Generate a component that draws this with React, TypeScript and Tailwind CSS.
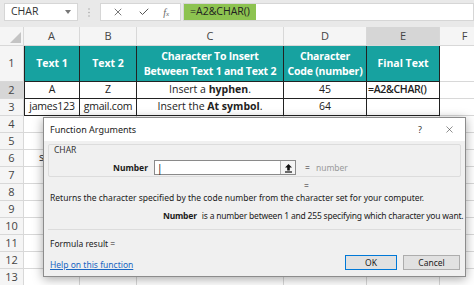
import { X, Check } from 'lucide-react';

const cellFont = { fontFamily: '"Open Sans", "Noto Sans", sans-serif' };
const uiFont = { fontFamily: '"Noto Sans", "Open Sans", sans-serif' };

// column widths: rowhead, A, B, C, D, E, F
const cols = 'grid grid-cols-[24px_56px_57px_147px_83px_73px_50px]';
const letters = ['A', 'B', 'C', 'D', 'E', 'F'];

function UploadIcon() {
    return (
        <svg width="9" height="10" viewBox="0 0 9 10">
            <path d="M4.5 1 L8 4.6 H5.8 V7.4 H3.2 V4.6 H1 Z" fill="#111" />
            <rect x="1" y="8.4" width="7" height="1.2" fill="#111" />
        </svg>
    );
}

function FormulaBar() {
    return (
        <div className="h-[24px] bg-[#e9e9e9] flex items-start pt-[3px] pl-[4px] gap-0" style={cellFont}>
            <div className="w-[74px] h-[18px] bg-white border border-[#d6d6d6] flex items-center justify-between px-[6px] text-[10.5px] text-[#333]">
                <span>CHAR</span>
                <svg width="6" height="4" viewBox="0 0 6 4">
                    <path d="M0 0 H6 L3 4 Z" fill="#777" />
                </svg>
            </div>
            <div className="w-[22px] h-[18px] flex items-center justify-center">
                <svg width="2" height="9" viewBox="0 0 2 9">
                    <circle cx="1" cy="1" r="0.8" fill="#aaa" />
                    <circle cx="1" cy="4.5" r="0.8" fill="#aaa" />
                    <circle cx="1" cy="8" r="0.8" fill="#aaa" />
                </svg>
            </div>
            <div className="w-[81px] h-[18px] bg-white border border-[#d6d6d6] flex items-center justify-around px-[4px] text-[#555]">
                <X size={12} strokeWidth={1.6} />
                <Check size={12} strokeWidth={2} />
                <span className="italic text-[10px] text-[#666]" style={{ fontFamily: '"Liberation Serif", serif' }}>
                    f<span className="text-[7px]">x</span>
                </span>
            </div>
            <div className="flex-1 h-[18px] bg-white border border-[#d6d6d6] ml-[2px] flex items-center">
                <span className="h-full bg-[#8dc350] px-[6px] flex items-center text-[10.5px] text-[#222]">=A2&amp;CHAR()</span>
            </div>
        </div>
    );
}

function Sheet() {
    const rowNums = Array.from({ length: 13 }, (_, i) => i + 1);
    const g = 'border-r border-b border-[#d8d8d8]';
    const t = 'border-r border-b border-[#222]';
    const teal = 'bg-[#17a2a0] text-white font-bold';

    return (
        <div className={`${cols} text-[10.5px] text-[#222]`} style={cellFont}>
            {/* column headers */}
            <div className={`h-[19px] bg-[#f5f5f5] ${g} flex items-end justify-end p-[2px]`}>
                <svg width="11" height="11" viewBox="0 0 11 11">
                    <path d="M11 0 V11 H0 Z" fill="#c4c4c4" />
                </svg>
            </div>
            {letters.map(l => (
                <div
                    key={l}
                    className={`h-[19px] ${l === 'E' ? 'bg-[#d6d6d6]' : 'bg-[#f5f5f5]'} border-r border-b border-[#d8d8d8] flex items-center justify-center text-[11px] text-[#444]`}
                >
                    {l}
                </div>
            ))}

            {rowNums.map(r => {
                const h = r === 1 ? 'h-[36px]' : 'h-[17px]';
                const head = (
                    <div
                        key={`h${r}`}
                        className={`${h} ${r === 2 ? 'bg-[#d6d6d6]' : 'bg-[#f5f5f5]'} ${g} flex items-center justify-center text-[11px] text-[#444]`}
                    >
                        {r}
                    </div>
                );
                if (r === 1) {
                    return [
                        head,
                        <div key="a1" className={`${h} ${teal} ${t} border-l flex items-center justify-center`}>Text 1</div>,
                        <div key="b1" className={`${h} ${teal} ${t} flex items-center justify-center`}>Text 2</div>,
                        <div key="c1" className={`${h} ${teal} ${t} flex items-center justify-center text-center leading-[15px] tracking-[-0.2px]`}>
                            Character To Insert<br />Between Text 1 and Text 2
                        </div>,
                        <div key="d1" className={`${h} ${teal} ${t} flex items-center justify-center text-center leading-[15px] tracking-[-0.2px]`}>
                            Character<br />Code (number)
                        </div>,
                        <div key="e1" className={`${h} ${teal} ${t} flex items-center justify-center`}>Final Text</div>,
                        <div key="f1" className={`${h} ${g}`} />,
                    ];
                }
                if (r === 2) {
                    return [
                        head,
                        <div key="a2" className={`${h} ${t} border-l flex items-center justify-center`}>A</div>,
                        <div key="b2" className={`${h} ${t} flex items-center justify-center`}>Z</div>,
                        <div key="c2" className={`${h} ${t} flex items-center justify-center`}>
                            <span>Insert a <b>hyphen</b>.</span>
                        </div>,
                        <div key="d2" className={`${h} ${t} flex items-center justify-center`}>45</div>,
                        <div key="e2" className={`${h} ${t} flex items-center pl-[1px] font-semibold tracking-[-0.3px]`}>=A2&amp;CHAR()</div>,
                        <div key="f2" className={`${h} ${g}`} />,
                    ];
                }
                if (r === 3) {
                    return [
                        head,
                        <div key="a3" className={`${h} ${t} border-l flex items-center justify-center tracking-[-0.2px]`}>james123</div>,
                        <div key="b3" className={`${h} ${t} flex items-center justify-center tracking-[-0.2px]`}>gmail.com</div>,
                        <div key="c3" className={`${h} ${t} flex items-center justify-center`}>
                            <span>Insert the <b>At symbol</b>.</span>
                        </div>,
                        <div key="d3" className={`${h} ${t} flex items-center justify-center`}>64</div>,
                        <div key="e3" className={`${h} ${t}`} />,
                        <div key="f3" className={`${h} ${g}`} />,
                    ];
                }
                return [
                    head,
                    <div key={`a${r}`} className={`${h} ${g} flex items-center pl-[15px]`}>{r === 6 ? 's' : ''}</div>,
                    ...['b', 'c', 'd', 'e', 'f'].map(c => <div key={`${c}${r}`} className={`${h} ${g}`} />),
                ];
            })}
        </div>
    );
}

function Dialog() {
    return (
        <div
            className="absolute left-[43px] top-[117px] w-[423px] h-[160px] bg-[#f0f0f0] border border-[#8c8c8c] shadow-[0_2px_10px_rgba(0,0,0,0.35)] flex flex-col text-[8.5px] text-[#1a1a1a] leading-[10px] whitespace-nowrap"
            style={uiFont}
        >
            <div className="h-[23px] shrink-0 bg-white flex items-center justify-between pl-[6px] pr-[10px]">
                <span className="text-[9px]">Function Arguments</span>
                <div className="flex items-center gap-[22px] text-[#333]">
                    <span className="text-[9px]">?</span>
                    <X size={11} strokeWidth={1.2} />
                </div>
            </div>
            <div className="px-[4px] flex flex-col shrink-0">
                <div className="mt-[3px] h-[33px] border border-[#dcdcdc] rounded-[2px] flex flex-col">
                    <div className="pl-[5px] h-[11px] text-[#333]">CHAR</div>
                    <div className="mt-[4px] h-[15px] flex items-center">
                        <span className="w-[99px] text-right font-bold">Number</span>
                        <div className="ml-[6px] w-[142px] h-[15px] bg-white border border-[#8a8a8a] flex items-center justify-between">
                            <span className="pl-[2px] text-[10px] leading-none">|</span>
                            <div className="w-[15px] h-[13px] border-l border-[#b5b5b5] bg-[#f4f4f4] flex items-center justify-center">
                                <UploadIcon />
                            </div>
                        </div>
                        <span className="ml-[9px]">=</span>
                        <span className="ml-[6px] text-[#9a9a9a]">number</span>
                    </div>
                </div>
                <div className="mt-[4px] pl-[256px]">=</div>
                <div className="mt-[2px] pl-[2px]">Returns the character specified by the code number from the character set for your computer.</div>
                <div className="mt-[8px] pl-[115px] tracking-[-0.2px]">
                    <b>Number</b>
                    <span className="ml-[5px]">is a number between 1 and 255 specifying which character you want.</span>
                </div>
                <div className="mt-[8px] border-t border-[#dcdcdc]" />
                <div className="mt-[9px] pl-[2px]">Formula result =</div>
                <div className="mt-[6px] h-[15px] flex items-center justify-between">
                    <span className="pl-[2px] pt-[5px] text-[#1a66c2] underline">Help on this function</span>
                    <div className="flex gap-[6px] pr-[1px]">
                        <div className="w-[52px] h-[15px] bg-[#e1e1e1] border border-[#0078d7] flex items-center justify-center">OK</div>
                        <div className="w-[57px] h-[15px] bg-[#e1e1e1] border border-[#adadad] flex items-center justify-center">Cancel</div>
                    </div>
                </div>
            </div>
        </div>
    );
}

export default function App() {
    return (
        <div className="relative w-[474px] h-[285px] overflow-hidden bg-white">
            <FormulaBar />
            <div className="h-[3px] bg-[#e9e9e9]" />
            <Sheet />
            <Dialog />
        </div>
    );
}
